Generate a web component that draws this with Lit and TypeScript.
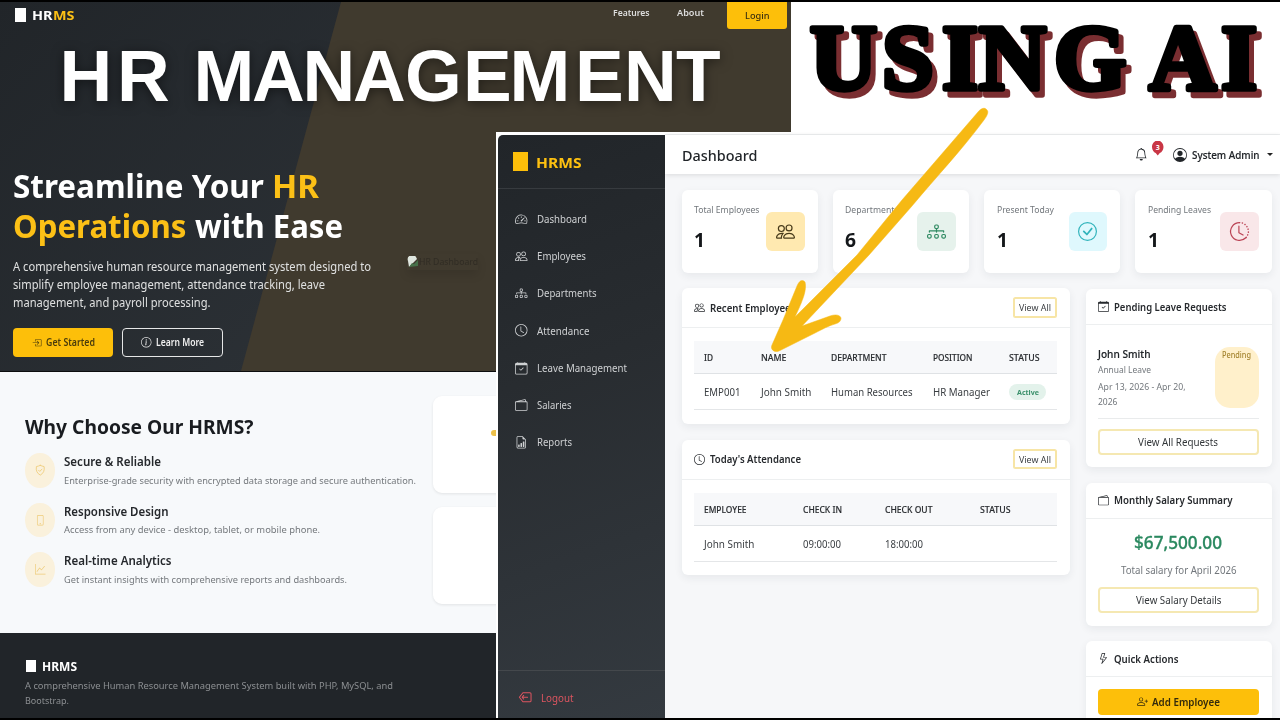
import { LitElement, html, css, svg } from "lit";
import { customElement, property } from "lit/decorators.js";

const ICONS: Record<string, string> = {
  speedometer:
    "M8 4a.5.5 0 0 1 .5.5V6a.5.5 0 0 1-1 0V4.5A.5.5 0 0 1 8 4M3.732 5.732a.5.5 0 0 1 .707 0l.915.914a.5.5 0 1 1-.708.708l-.914-.915a.5.5 0 0 1 0-.707M2 10a.5.5 0 0 1 .5-.5h1.586a.5.5 0 0 1 0 1H2.5A.5.5 0 0 1 2 10m9.5 0a.5.5 0 0 1 .5-.5h1.5a.5.5 0 0 1 0 1H12a.5.5 0 0 1-.5-.5m.754-4.246a.39.39 0 0 0-.527-.02L7.547 9.31a.91.91 0 1 0 1.302 1.258l3.434-4.297a.39.39 0 0 0-.029-.518zM0 10a8 8 0 1 1 15.547 2.661c-.442 1.253-1.845 1.602-2.932 1.25C11.309 13.488 9.475 13 8 13c-1.474 0-3.31.488-4.615.911-1.087.352-2.49.003-2.932-1.25A8 8 0 0 1 0 10m8-7a7 7 0 0 0-6.603 9.329c.203.575.923.876 1.68.63C4.397 12.533 6.358 12 8 12s3.604.532 4.923.96c.757.245 1.477-.056 1.68-.631A7 7 0 0 0 8 3",
  people:
    "M15 14s1 0 1-1-1-4-5-4-5 3-5 4 1 1 1 1zm-7.978-1L7 12.996c.001-.264.167-1.03.76-1.72C8.312 10.629 9.282 10 11 10c1.717 0 2.687.63 3.24 1.276.593.69.758 1.457.76 1.72l-.008.002-.014.002zM11 7a2 2 0 1 0 0-4 2 2 0 0 0 0 4m3-2a3 3 0 1 1-6 0 3 3 0 0 1 6 0M6.936 9.28a6 6 0 0 0-1.23-.247A7 7 0 0 0 5 9c-4 0-5 3-5 4q0 1 1 1h4.216A2.24 2.24 0 0 1 5 13c0-1.01.377-2.042 1.09-2.904.243-.294.526-.569.846-.816M4.92 10A5.5 5.5 0 0 0 4 13H1c0-.26.164-1.03.76-1.724.545-.636 1.492-1.256 3.16-1.275ZM1.5 5.5a3 3 0 1 1 6 0 3 3 0 0 1-6 0m3-2a2 2 0 1 0 0 4 2 2 0 0 0 0-4",
  diagram:
    "M6 3.5A1.5 1.5 0 0 1 7.5 2h1A1.5 1.5 0 0 1 10 3.5v1A1.5 1.5 0 0 1 8.5 6v1H14a.5.5 0 0 1 .5.5v1a.5.5 0 0 1-1 0V8h-5v.5a.5.5 0 0 1-1 0V8h-5v.5a.5.5 0 0 1-1 0v-1A.5.5 0 0 1 2 7h5.5V6A1.5 1.5 0 0 1 6 4.5zM8.5 5a.5.5 0 0 0 .5-.5v-1a.5.5 0 0 0-.5-.5h-1a.5.5 0 0 0-.5.5v1a.5.5 0 0 0 .5.5zM0 11.5A1.5 1.5 0 0 1 1.5 10h1A1.5 1.5 0 0 1 4 11.5v1A1.5 1.5 0 0 1 2.5 14h-1A1.5 1.5 0 0 1 0 12.5zm1.5-.5a.5.5 0 0 0-.5.5v1a.5.5 0 0 0 .5.5h1a.5.5 0 0 0 .5-.5v-1a.5.5 0 0 0-.5-.5zm4.5.5A1.5 1.5 0 0 1 7.5 10h1a1.5 1.5 0 0 1 1.5 1.5v1A1.5 1.5 0 0 1 8.5 14h-1A1.5 1.5 0 0 1 6 12.5zm1.5-.5a.5.5 0 0 0-.5.5v1a.5.5 0 0 0 .5.5h1a.5.5 0 0 0 .5-.5v-1a.5.5 0 0 0-.5-.5zm4.5.5a1.5 1.5 0 0 1 1.5-1.5h1a1.5 1.5 0 0 1 1.5 1.5v1a1.5 1.5 0 0 1-1.5 1.5h-1a1.5 1.5 0 0 1-1.5-1.5zm1.5-.5a.5.5 0 0 0-.5.5v1a.5.5 0 0 0 .5.5h1a.5.5 0 0 0 .5-.5v-1a.5.5 0 0 0-.5-.5z",
  clock:
    "M8 3.5a.5.5 0 0 0-1 0V9a.5.5 0 0 0 .252.434l3.5 2a.5.5 0 0 0 .496-.868L8 8.71zM8 16A8 8 0 1 0 8 0a8 8 0 0 0 0 16m7-8A7 7 0 1 1 1 8a7 7 0 0 1 14 0",
  calendar:
    "M10.854 7.146a.5.5 0 0 1 0 .708l-3 3a.5.5 0 0 1-.708 0l-1.5-1.5a.5.5 0 1 1 .708-.708L7.5 9.793l2.646-2.647a.5.5 0 0 1 .708 0M3.5 0a.5.5 0 0 1 .5.5V1h8V.5a.5.5 0 0 1 1 0V1h1a2 2 0 0 1 2 2v11a2 2 0 0 1-2 2H2a2 2 0 0 1-2-2V3a2 2 0 0 1 2-2h1V.5a.5.5 0 0 1 .5-.5M1 4v10a1 1 0 0 0 1 1h12a1 1 0 0 0 1-1V4z",
  wallet:
    "M12.136.326A1.5 1.5 0 0 1 14 1.78V3h.5A1.5 1.5 0 0 1 16 4.5v9a1.5 1.5 0 0 1-1.5 1.5h-13A1.5 1.5 0 0 1 0 13.5v-9a1.5 1.5 0 0 1 1.432-1.499zM5.562 3H13V1.78a.5.5 0 0 0-.621-.484zM1.5 4a.5.5 0 0 0-.5.5v9a.5.5 0 0 0 .5.5h13a.5.5 0 0 0 .5-.5v-9a.5.5 0 0 0-.5-.5z",
  report:
    "M10 13.5a.5.5 0 0 0 .5.5h1a.5.5 0 0 0 .5-.5v-6a.5.5 0 0 0-.5-.5h-1a.5.5 0 0 0-.5.5zm-2.5.5a.5.5 0 0 1-.5-.5v-4a.5.5 0 0 1 .5-.5h1a.5.5 0 0 1 .5.5v4a.5.5 0 0 1-.5.5zm-3 0a.5.5 0 0 1-.5-.5v-2a.5.5 0 0 1 .5-.5h1a.5.5 0 0 1 .5.5v2a.5.5 0 0 1-.5.5zM14 14V4.5L9.5 0H4a2 2 0 0 0-2 2v12a2 2 0 0 0 2 2h8a2 2 0 0 0 2-2M9.5 3A1.5 1.5 0 0 0 11 4.5h2V14a1 1 0 0 1-1 1H4a1 1 0 0 1-1-1V2a1 1 0 0 1 1-1h5.5z",
  enter:
    "M6 3.5a.5.5 0 0 1 .5-.5h8a.5.5 0 0 1 .5.5v9a.5.5 0 0 1-.5.5h-8a.5.5 0 0 1-.5-.5v-2a.5.5 0 0 0-1 0v2A1.5 1.5 0 0 0 6.5 14h8a1.5 1.5 0 0 0 1.5-1.5v-9A1.5 1.5 0 0 0 14.5 2h-8A1.5 1.5 0 0 0 5 3.5v2a.5.5 0 0 0 1 0zM11.854 8.354a.5.5 0 0 0 0-.708l-3-3a.5.5 0 1 0-.708.708L10.293 7.5H1.5a.5.5 0 0 0 0 1h8.793l-2.147 2.146a.5.5 0 0 0 .708.708z",
  info:
    "M8 15A7 7 0 1 1 8 1a7 7 0 0 1 0 14m0 1A8 8 0 1 0 8 0a8 8 0 0 0 0 16M8.93 6.588l-2.29.287-.082.38.45.083c.294.07.352.176.288.469l-.738 3.468c-.194.897.105 1.319.808 1.319.545 0 1.178-.252 1.465-.598l.088-.416c-.2.176-.492.246-.686.246-.275 0-.375-.193-.304-.533zM9 4.5a1 1 0 1 1-2 0 1 1 0 0 1 2 0",
  bell:
    "M8 16a2 2 0 0 0 2-2H6a2 2 0 0 0 2 2M8 1.918l-.797.161A4 4 0 0 0 4 6c0 .628-.134 2.197-.459 3.742-.16.767-.376 1.566-.663 2.258h10.244c-.287-.692-.502-1.49-.663-2.258C12.134 8.197 12 6.628 12 6a4 4 0 0 0-3.203-3.92zM14.22 12c.223.447.481.801.78 1H1c.299-.199.557-.553.78-1C2.68 10.2 3 6.88 3 6c0-2.42 1.72-4.44 4.005-4.901a1 1 0 1 1 1.99 0A5 5 0 0 1 13 6c0 .88.32 4.2 1.22 6",
  person:
    "M11 6a3 3 0 1 1-6 0 3 3 0 0 1 6 0M0 8a8 8 0 1 1 16 0A8 8 0 0 1 0 8m8-7a7 7 0 0 0-5.468 11.37C3.242 11.226 4.805 10 8 10s4.757 1.225 5.468 2.37A7 7 0 0 0 8 1",
  check:
    "M8 15A7 7 0 1 1 8 1a7 7 0 0 1 0 14m0 1A8 8 0 1 0 8 0a8 8 0 0 0 0 16M10.97 4.97l-.02.022-3.473 4.425-2.093-2.094a.75.75 0 0 0-1.06 1.06L6.97 11.03a.75.75 0 0 0 1.079-.02l3.992-4.99a.75.75 0 0 0-1.071-1.05",
  lightning:
    "M5.52.359A.5.5 0 0 1 6 0h4a.5.5 0 0 1 .474.658L8.694 6H12.5a.5.5 0 0 1 .395.807l-7 9a.5.5 0 0 1-.873-.454L6.823 9.5H3.5a.5.5 0 0 1-.48-.641zM6.374 1 4.168 8.5H7.5a.5.5 0 0 1 .478.647L6.78 13.04 11.478 7H8a.5.5 0 0 1-.474-.658L9.306 1z",
  personPlus:
    "M6 8a3 3 0 1 0 0-6 3 3 0 0 0 0 6m2-3a2 2 0 1 1-4 0 2 2 0 0 1 4 0m4 8c0 1-1 1-1 1H1s-1 0-1-1 1-4 6-4 6 3 6 4m-1-.004c-.001-.246-.154-.986-.832-1.664C9.516 10.68 8.289 10 6 10s-3.516.68-4.168 1.332c-.678.678-.83 1.418-.832 1.664zM13.5 5a.5.5 0 0 1 .5.5V7h1.5a.5.5 0 0 1 0 1H14v1.5a.5.5 0 0 1-1 0V8h-1.5a.5.5 0 0 1 0-1H13V5.5a.5.5 0 0 1 .5-.5",
  phone:
    "M11 1a1 1 0 0 1 1 1v12a1 1 0 0 1-1 1H5a1 1 0 0 1-1-1V2a1 1 0 0 1 1-1zM5 0a2 2 0 0 0-2 2v12a2 2 0 0 0 2 2h6a2 2 0 0 0 2-2V2a2 2 0 0 0-2-2zM8 14a1 1 0 1 0 0-2 1 1 0 0 0 0 2",
  graph:
    "M0 0h1v15h15v1H0zm14.817 3.113a.5.5 0 0 1 .07.704l-4.5 5.5a.5.5 0 0 1-.74.037L7.06 6.767l-3.656 5.027a.5.5 0 0 1-.808-.588l4-5.5a.5.5 0 0 1 .758-.06l2.609 2.61 4.15-5.073a.5.5 0 0 1 .704-.07",
};

/* A 16-unit glyph that takes its size from the font size and its colour from the text. */
@customElement("hr-icon")
class HrIcon extends LitElement {
  @property() name = "";
  static styles = css`
    :host { display: inline-flex; width: 1em; height: 1em; flex: none; }
    svg { width: 100%; height: 100%; fill: currentColor; overflow: visible; }
    .line { fill: none; stroke: currentColor; stroke-width: 1; stroke-linecap: round; stroke-linejoin: round; }
    .dots { stroke-width: 1.2; stroke-dasharray: 0.2 2.2; }
    .firm { stroke-width: 1.3; }
  `;
  render() {
    let body;
    if (this.name === "history") {
      body = svg`<g class="line"><path d="M8 .5a7.5 7.5 0 1 0 5.3 12.8M7.5 3.5V9l3.5 2"/><path class="dots" d="M8 .5a7.5 7.5 0 0 1 5.3 12.8"/></g>`;
    } else if (this.name === "shield") {
      body = svg`<g class="line firm"><path d="M8 .6C6.3 1.4 4 2 2.1 2.4 1.2 8.4 3 12.6 8 15.4c5-2.800 6.800-7 5.900-13C12 2 9.700 1.400 8 .600z"/><path d="M5.500 8l1.800 1.800 3.300-3.500"/></g>`;
    } else if (this.name === "logout") {
      body = svg`<g class="line firm"><path d="M5 2.200H14Q15.400 2.200 15.400 3.600V12.400Q15.400 13.800 14 13.800H5L.5 8Z"/><path d="M4.500 8H11M6 5.700L4 8l2 2.300"/></g>`;
    } else {
      body = svg`<path fill-rule="evenodd" d=${ICONS[this.name]}></path>`;
    }
    return html`<svg viewBox="0 0 16 16">${body}</svg>`;
  }
}

/* One line of text set to a given measure: the run is condensed or widened to w pixels. */
@customElement("fit-text")
class FitText extends LitElement {
  @property({ type: Number }) w = 0;
  static styles = css`
    :host { display: inline-block; white-space: pre; flex: none; }
    span { display: inline-block; transform-origin: 0 50%; }
  `;
  firstUpdated() {
    const run = this.renderRoot.querySelector("span") as HTMLElement;
    const natural = run.getBoundingClientRect().width;
    if (!natural || !this.w) return;
    run.style.transform = `scaleX(${this.w / natural})`;
    run.style.marginRight = `${this.w - natural}px`;
  }
  render() {
    return html`<span><slot></slot></span>`;
  }
}

const t = (text: string, w: number) => html`<fit-text w=${w}>${text}</fit-text>`;

@customElement("landing-page")
class LandingPage extends LitElement {
  static styles = css`
    :host { display: block; width: 791px; }
    .hero {
      box-sizing: border-box; height: 370px; display: flex; flex-direction: column;
      background: linear-gradient(135deg, #212529 0%, #2b3035 55%, #343a40 100%);
      border-bottom: 1px solid #0c0d0e; position: relative; color: #fff;
    }
    .wedge {
      position: absolute; inset: 0; background: #403a2e;
      clip-path: polygon(341px 0, 100% 0, 100% 100%, 241px 100%);
    }
    .nav, .copy { position: relative; }
    .nav { display: flex; height: 27px; padding: 0 4px 0 15px; align-items: center; }
    .mark { width: 11px; height: 14px; background: #fff; margin-right: 6px; }
    .brand { display: flex; align-items: center; font-size: 13px; font-weight: 700; flex: 1; margin-top: -1px; }
    .gold { color: #fcc016; }
    .link { font-size: 9.5px; font-weight: 600; color: #dedede; margin: -7px 27.500px 0 0; }
    .last { margin-right: 23.500px; }
    .login {
      box-sizing: border-box; width: 60px; height: 27px; background: #fdbf0a; border-radius: 0 0 3px 3px; color: #3a300f;
      font-size: 9.6px; font-weight: 500; display: flex; align-items: center; justify-content: center; padding-bottom: 1px;
    }
    .copy { padding: 137px 0 0 13px; display: flex; align-items: flex-start; }
    .col { width: 394px; }
    h1 { margin: 0; font-size: 33px; line-height: 40px; font-weight: 700; }
    .lead { margin-top: 11px; font-size: 11.700px; line-height: 18px; color: #dfe0e0; }
    .row { display: flex; }
    .acts { display: flex; gap: 9px; margin-top: 17px; }
    .btn {
      box-sizing: border-box; height: 28.500px; display: flex; align-items: center; justify-content: center;
      gap: 4.500px; border-radius: 4px; font-size: 9.800px; font-weight: 600; width: 100px;
    }
    .fill { background: #fdbf0a; color: #4a3c0c; }
    .line { border: 1.500px solid #e6e7e7; width: 101px; color: #eee; gap: 5px; }
    .btn hr-icon { font-size: 9.500px; }
    .line hr-icon { font-size: 10.500px; }
    .broken { margin-top: 88px; display: flex; gap: 1px; align-items: center; color: #302c24; font-size: 9.500px; line-height: 16px;
      box-shadow: 0 5px 10px rgba(0,0,0,.1); }
    .broken svg { width: 11px; height: 12px; }
    .why { height: 261px; background: #f7f9fb; box-sizing: border-box; padding: 24px 0 0 25px; display: flex; align-items: flex-start; }
    .left { width: 408px; padding-top: 17px; }
    h2 { margin: 0 0 12px; font-size: 20px; line-height: 28px; font-weight: 700; color: #191c20; }
    .feat { display: flex; height: 49.500px; gap: 9.500px; }
    .dot { width: 29.500px; height: 34.500px; border-radius: 50%; background: #faf1dc; color: #eecb78; display: flex; align-items: center; justify-content: center; font-size: 10.500px; }
    .name { font-size: 11.800px; line-height: 16px; font-weight: 600; color: #25282c; }
    .desc { font-size: 9.700px; line-height: 14px; color: #74787c; margin-top: 4.500px; }
    .cards { display: flex; flex-direction: column; gap: 14.500px; }
    .card { width: 80px; height: 96.500px; border-radius: 9px; background: #fff; box-shadow: 0 1px 3px rgba(0,0,0,.09); box-sizing: border-box; padding: 34px 0 0 58px; }
    .bit { width: 12px; height: 6px; border-radius: 3px; background: #ecc04a; }
    .foot { box-sizing: border-box; height: 85px; background: #212529; padding: 25px 0 0 25px; color: #fff; }
    .fb { display: flex; align-items: center; height: 16px; font-size: 12px; font-weight: 700; }
    .fb .mark { width: 10px; height: 12.500px; margin: 0 6px 0 1px; }
    .fd { margin-top: 5px; font-size: 9.800px; line-height: 14.800px; color: #8c8f92; }
  `;
  render() {
    const feats = [
      ["shield", "Secure & Reliable", 97, "Enterprise-grade security with encrypted data storage and secure authentication.", 352],
      ["phone", "Responsive Design", 104.5, "Access from any device - desktop, tablet, or mobile phone.", 256],
      ["graph", "Real-time Analytics", 107.5, "Get instant insights with comprehensive reports and dashboards.", 283],
    ] as const;
    return html`
      <section class="hero">
        <div class="wedge"></div>
        <nav class="nav">
          <div class="brand"><i class="mark"></i>${t("HR", 20.5)}<span class="gold">${t("MS", 21.5)}</span></div>
          <span class="link">${t("Features", 36.5)}</span>
          <span class="link last">${t("About", 27)}</span>
          <div class="login">${t("Login", 24.5)}</div>
        </nav>
        <div class="copy">
          <div class="col">
            <h1>
              <div class="row">${t("Streamline Your ", 259)}<span class="gold">${t("HR", 47)}</span></div>
              <div class="row"><span class="gold">${t("Operations", 173.5)}</span>${t(" with Ease", 156)}</div>
            </h1>
            <div class="lead">
              <div class="row">${t("A comprehensive human resource management system designed to", 358)}</div>
              <div class="row">${t("simplify employee management, attendance tracking, leave", 312)}</div>
              <div class="row">${t("management, and payroll processing.", 197.5)}</div>
            </div>
            <div class="acts">
              <div class="btn fill"><hr-icon name="enter"></hr-icon>${t("Get Started", 49)}</div>
              <div class="btn line"><hr-icon name="info"></hr-icon>${t("Learn More", 48)}</div>
            </div>
          </div>
          <div class="broken">
            <svg viewBox="0 0 11 12"><path d="M1 5a4.500 4.500 0 0 1 8-4l1 2L2 11z" fill="#dfe6df"></path><path d="M2 11l3-4 2 1 4-4v6z" fill="#47714a"></path></svg>
            ${t("HR Dashboard", 59)}
          </div>
        </div>
      </section>
      <section class="why">
        <div class="left">
          <h2>${t("Why Choose Our HRMS?", 228.5)}</h2>
          ${feats.map(
            ([icon, name, nw, desc, dw]) => html`<div class="feat">
              <div class="dot"><hr-icon name=${icon}></hr-icon></div>
              <div><div class="name">${t(name, nw)}</div><div class="desc">${t(desc, dw)}</div></div>
            </div>`
          )}
        </div>
        <div class="cards"><div class="card"><div class="bit"></div></div><div class="card"></div></div>
      </section>
      <footer class="foot">
        <div class="fb"><i class="mark"></i>${t("HRMS", 35)}</div>
        <div class="fd">
          <div>${t("A comprehensive Human Resource Management System built with PHP, MySQL, and", 368)}</div>
          <div>${t("Bootstrap.", 44)}</div>
        </div>
      </footer>
    `;
  }
}

@customElement("hr-dashboard")
class HrDashboard extends LitElement {
  static styles = css`
    :host { display: grid; grid-template-columns: 167px 1fr; box-sizing: border-box; width: 784px; height: 586px;
      padding: 3px 0 0 2px; background: #fff; overflow: hidden; color: #212529; }
    .side { background: linear-gradient(160deg, #212529, #282c30 40%, #343a40); border-radius: 5px 0 0 0; display: flex; flex-direction: column; height: 583px; }
    .brand { box-sizing: border-box; height: 54px; border-bottom: 1px solid #373b3f; padding-left: 15px; display: flex; align-items: center; gap: 8px; color: #fdc010; font-size: 15px; font-weight: 700; }
    .mark { width: 14.500px; height: 19px; background: #fdbf0a; }
    .menu { flex: 1; padding-top: 11.500px; }
    .item { height: 37.200px; display: flex; align-items: center; padding-left: 17px; gap: 9px; font-size: 10.700px; color: #cfd1d3; }
    .item hr-icon, .out hr-icon { font-size: 12.500px; }
    .out { box-sizing: border-box; height: 48px; border-top: 1px solid #44484c; display: flex; align-items: center; padding: 6px 0 0 21px; gap: 9px; color: #dd5560; font-size: 10.700px; }
    .main { display: flex; flex-direction: column; background: #f6f7f9; min-width: 0; height: 583px; }
    .top { height: 39px; flex: none; background: #fff; display: flex; align-items: center; padding: 0 7.500px 0 16.500px; box-shadow: 0 1px 5px rgba(0,0,0,.12), 0 -1px 0 #eef0f1; }
    .title { flex: 1; font-size: 15px; font-weight: 500; }
    .bell { font-size: 12.500px; }
    .badge { width: 11.500px; height: 15px; margin: -13px 9.500px 0 4.500px; background: #c93645; color: #fff; clip-path: path("M5.750 0C9 0 11.500 3 11.500 6.500C11.500 9.500 9.800 11.800 7.800 12.600L5.750 15L3.700 12.600C1.700 11.800 0 9.500 0 6.500C0 3 2.500 0 5.750 0Z");
      font-size: 7px; font-weight: 700; line-height: 13px; text-align: center; }
    .avatar { font-size: 14px; }
    .user { font-size: 10.300px; font-weight: 500; margin: 0 7.500px 0 4.500px; -webkit-text-stroke: .15px; }
    .caret { border: 3px solid transparent; border-top: 3px solid #222; border-bottom: 0; }
    .body { padding: 16px 8px 0 16.500px; display: grid; grid-template-columns: 388px 186px; column-gap: 16px; row-gap: 15px; align-content: start; }
    .stats { grid-column: 1 / 3; display: grid; grid-template-columns: repeat(4, 1fr); gap: 15.300px; height: 83px; }
    .card { background: #fff; border-radius: 6px; box-shadow: 0 3px 9px rgba(30,40,60,.07); }
    .stat { display: flex; justify-content: space-between; padding: 12px 13px 0 12.500px; }
    .label { font-size: 9.400px; line-height: 14px; color: #72777c; white-space: nowrap; width: 66px; margin-top: 1px; }
    .num { font-size: 19.500px; line-height: 26px; font-weight: 700; margin-top: 9.500px; color: #14171a; }
    .tile { width: 38.500px; height: 38.500px; border-radius: 6px; margin-top: 10px; display: flex; align-items: center; justify-content: center; font-size: 19px; margin-left: -20px; }
    .amber { background: #ffe9b0; color: #473a1a; }
    .green { background: #e6f2ec; color: #2f8a62; }
    .cyan { background: #dff8fd; color: #31b3bb; }
    .red { background: #f9e7e9; color: #bb4455; }
    .stack { display: flex; flex-direction: column; gap: 16px; min-width: 0; }
    .tcard { height: 135.500px; }
    .head { box-sizing: border-box; height: 40px; border-bottom: 1px solid #edeff0; display: flex; align-items: center; padding: 0 12.500px; font-size: 10.500px; font-weight: 600; gap: 4.500px; color: #26292d; }
    .head hr-icon { font-size: 11px; }
    .head .grow { flex: 1; }
    .mini { box-sizing: border-box; width: 44px; height: 20.500px; border: 2px solid #f7e5a6; border-radius: 2.500px; font-size: 9.300px; font-weight: 400; display: flex; align-items: center; justify-content: center; color: #3d4044; }
    .table { margin: 13px 12.500px 0; }
    .tr { display: grid; box-sizing: border-box; height: 36px; align-items: center; padding: 1.500px 0 0 10px; border-bottom: 1px solid #e4e6e8; font-size: 10.600px; color: #3a3e42; }
    .th { height: 33px; padding-top: 1px; background: #f7f8fa; font-size: 9.500px; font-weight: 500; color: #2a2d31; border-bottom-color: #dfe2e5; -webkit-text-stroke: .15px; }
    .five { grid-template-columns: 56.500px 70.500px 101.500px 76.500px 1fr; }
    .four { grid-template-columns: 98.500px 82.500px 94.500px 1fr; }
    .pill { width: 37px; height: 16px; border-radius: 8px; background: #e3f2eb; color: #3c916c; font-size: 7.800px; font-weight: 700; display: flex; align-items: center; justify-content: center; }
    .right { display: flex; flex-direction: column; gap: 15.500px; padding-top: 1px; }
    .side-card .head { height: 36px; }
    .pad { padding: 0 13px 0 12.500px; }
    .leave { display: flex; justify-content: space-between; align-items: flex-start; border-bottom: 1px solid #e9ebec; height: 71.500px; padding-top: 21.500px; }
    .who { font-size: 10.500px; line-height: 14px; font-weight: 500; margin-bottom: 1px; -webkit-text-stroke: .15px; }
    .kind { font-size: 9.400px; line-height: 15.500px; color: #72777c; }
    .kind.date { margin-top: 1.500px; font-size: 9.300px; }
    .wait { width: 44px; height: 61.500px; border-radius: 15px; background: #fff0cb; color: #a4842f; font-size: 8px; font-weight: 500; line-height: 16.500px; text-align: center; }
    .wide { box-sizing: border-box; height: 25.500px; border: 2px solid #f5e8b2; border-radius: 4px; font-size: 10.500px; display: flex; align-items: center; justify-content: center; color: #33373a; gap: 4px; }
    .c1 { height: 178px; } .c1 .wide { margin-top: 10px; }
    .c2 { height: 143px; text-align: center; }
    .sum { font-size: 17.500px; line-height: 24px; font-weight: 500; color: #2b8960; padding-top: 11px; -webkit-text-stroke: .3px; }
    .note { font-size: 10.200px; line-height: 16px; margin: 8.500px 0 9px; color: #72777c; }
    .c3 { height: 100px; } .c3 .wide { background: #fdbf0a; border: 0; font-weight: 600; margin-top: 12px; color: #332a0c; }
    .c3 .wide hr-icon { font-size: 11px; }
  `;
  render() {
    const menu = [
      ["speedometer", "Dashboard", 50], ["people", "Employees", 49], ["diagram", "Departments", 59.5],
      ["clock", "Attendance", 52.5], ["calendar", "Leave Management", 90], ["wallet", "Salaries", 34.5], ["report", "Reports", 35],
    ] as const;
    const stats = [
      ["Total Employees", 65.5, "1", 11, "amber", "people"], ["Departments", 53.5, "6", 11, "green", "diagram"],
      ["Present Today", 57, "1", 11, "cyan", "check"], ["Pending Leaves", 63, "1", 11, "red", "history"],
    ] as const;
    return html`
      <aside class="side">
        <div class="brand"><i class="mark"></i>${t("HRMS", 45.5)}</div>
        <div class="menu">
          ${menu.map(([icon, name, w]) => html`<div class="item"><hr-icon name=${icon}></hr-icon>${t(name, w)}</div>`)}
        </div>
        <div class="out"><hr-icon name="logout"></hr-icon>${t("Logout", 32.5)}</div>
      </aside>
      <div class="main">
        <header class="top">
          <div class="title">${t("Dashboard", 75.5)}</div>
          <hr-icon class="bell" name="bell"></hr-icon>
          <div class="badge">3</div>
          <hr-icon class="avatar" name="person"></hr-icon>
          <div class="user">${t("System Admin", 67.5)}</div>
          <i class="caret"></i>
        </header>
        <div class="body">
          <div class="stats">
            ${stats.map(
              ([label, w, num, nw, tone, icon]) => html`<div class="card stat">
                <div><div class="label">${t(label, w)}</div><div class="num">${t(num, nw)}</div></div>
                <div class="tile ${tone}"><hr-icon name=${icon}></hr-icon></div>
              </div>`
            )}
          </div>
          <div class="stack">
            <div class="card tcard">
              <div class="head"><hr-icon name="people"></hr-icon><span class="grow">${t("Recent Employees", 85.5)}</span><span class="mini">${t("View All", 32)}</span></div>
              <div class="table">
                <div class="tr th five"><span>${t("ID", 9)}</span><span>${t("NAME", 25.5)}</span><span>${t("DEPARTMENT", 55.5)}</span><span>${t("POSITION", 39.5)}</span><span>${t("STATUS", 30.5)}</span></div>
                <div class="tr five"><span>${t("EMP001", 36.5)}</span><span>${t("John Smith", 50.5)}</span><span>${t("Human Resources", 81.5)}</span><span>${t("HR Manager", 57)}</span><span class="pill">${t("Active", 22)}</span></div>
              </div>
            </div>
            <div class="card tcard">
              <div class="head"><hr-icon name="clock"></hr-icon><span class="grow">${t("Today's Attendance", 91)}</span><span class="mini">${t("View All", 32)}</span></div>
              <div class="table">
                <div class="tr th four"><span>${t("EMPLOYEE", 42.5)}</span><span>${t("CHECK IN", 39)}</span><span>${t("CHECK OUT", 47.5)}</span><span>${t("STATUS", 30.5)}</span></div>
                <div class="tr four"><span>${t("John Smith", 50.5)}</span><span>${t("09:00:00", 38)}</span><span>${t("18:00:00", 38)}</span></div>
              </div>
            </div>
          </div>
          <div class="right">
            <div class="card side-card c1">
              <div class="head"><hr-icon name="calendar"></hr-icon>${t("Pending Leave Requests", 112.5)}</div>
              <div class="pad">
                <div class="leave">
                  <div>
                    <div class="who">${t("John Smith", 52.5)}</div>
                    <div class="kind">${t("Annual Leave", 53)}</div>
                    <div class="kind date">${t("Apr 13, 2026 - Apr 20,", 87.5)}</div>
                    <div class="kind">${t("2026", 19.5)}</div>
                  </div>
                  <div class="wait">${t("Pending", 29)}</div>
                </div>
                <div class="wide">${t("View All Requests", 80)}</div>
              </div>
            </div>
            <div class="card side-card c2">
              <div class="head"><hr-icon name="wallet"></hr-icon>${t("Monthly Salary Summary", 118.5)}</div>
              <div class="pad">
                <div class="sum">${t("$67,500.00", 88)}</div>
                <div class="note">${t("Total salary for April 2026", 115.5)}</div>
                <div class="wide">${t("View Salary Details", 85.5)}</div>
              </div>
            </div>
            <div class="card side-card c3">
              <div class="head"><hr-icon name="lightning"></hr-icon>${t("Quick Actions", 64.5)}</div>
              <div class="pad"><div class="wide"><hr-icon name="personPlus"></hr-icon>${t("Add Employee", 68)}</div></div>
            </div>
          </div>
        </div>
      </div>
    `;
  }
}

@customElement("app-root")
class AppRoot extends LitElement {
  static styles = css`
    :host { display: block; position: relative; width: 1280px; height: 720px; overflow: hidden; background: #fff;
      font-family: "Noto Sans", "Open Sans", sans-serif; }
    .bar { position: absolute; left: 0; right: 0; height: 2px; background: #000; z-index: 5; }
    .north { top: 0; }
    .south { bottom: 0; }
    landing-page { position: absolute; left: 0; top: 2px; }
    hr-dashboard { position: absolute; left: 496px; top: 132px; }
    .art { position: absolute; inset: 0; width: 1280px; height: 720px; }
    .caption { font: 700 73px "Liberation Sans", Arial, sans-serif; fill: #fff; filter: drop-shadow(0 2px 6px rgba(0,0,0,.5)); }
    .word { font: 700 93px "Liberation Serif", "Times New Roman", serif; fill: #000; stroke: #000; stroke-width: 5.500; stroke-linejoin: round;
      filter: drop-shadow(5.500px 6px 0 #7a2e31); }
    .arrow { fill: #f6b914; stroke: #f6b914; stroke-width: .5; stroke-linejoin: round; }
  `;
  render() {
    return html`
      <landing-page></landing-page>
      <hr-dashboard></hr-dashboard>
      <svg class="art" viewBox="0 0 1280 720">
        <text class="caption" x="59.500 117 160 193.500 252 302.500 353 405 463 509.500 575 624 676" y="101">HR MANAGEMENT</text>
        <text class="word" x="810 882 942 979 1054 1100 1149 1221" y="88.500">USING AI</text>
        <path class="arrow" d="M978 112C981 108 985 107 987 110C989 112 987 116 984 120C961 151 937 176 912 206L869 255L802 326L830 316C836 314 840 315 841 318C841 321 839 323 835 324C828 326 823 329 815 333L779 351C774 353 770 349 772 345L783 320L797 286C799 281 802 279 805 282C807 290 803 300 795 317L857 255L902 200Z"></path>
      </svg>
      <div class="bar north"></div>
      <div class="bar south"></div>
    `;
  }
}
